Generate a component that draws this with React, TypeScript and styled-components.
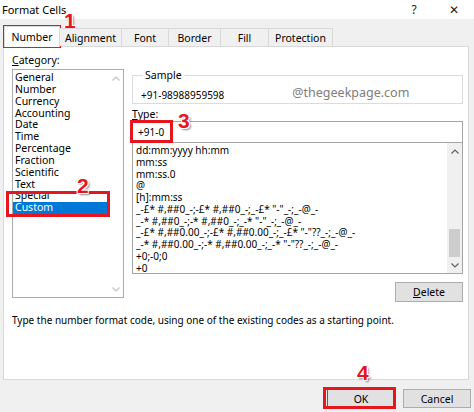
import React from "react";
import styled, { createGlobalStyle } from "styled-components";

const Global = createGlobalStyle`
  html, body { margin: 0; padding: 0; background: #f0f0f0; }
  body { font-family: "Noto Sans", "Open Sans", sans-serif; }
`;

const Window = styled.div`
  position: relative;
  width: 474px;
  height: 412px;
  overflow: hidden;
  background: #f0f0f0;
  display: flex;
  flex-direction: column;
  font-family: "Noto Sans", "Open Sans", sans-serif;
  font-size: 10px;
  color: #000;
`;

const TitleBar = styled.div`
  height: 19px;
  background: #fff;
  display: flex;
  align-items: center;
  padding-left: 2px;
`;

const Title = styled.div`
  flex: 1;
  font-size: 11px;
`;

const TitleButton = styled.div`
  width: 40px;
  text-align: center;
  font-size: 12px;
  color: #222;
`;

const TabStrip = styled.div`
  height: 27px;
  display: flex;
  align-items: flex-end;
  padding-left: 5px;
  position: relative;
  z-index: 1;
`;

const Tab = styled.div<{ $w: number; $active?: boolean }>`
  width: ${(p) => p.$w}px;
  height: ${(p) => (p.$active ? 21 : 18)}px;
  box-sizing: border-box;
  border: 1px solid #d9d9d9;
  border-bottom: none;
  margin-left: -1px;
  margin-bottom: ${(p) => (p.$active ? -1 : 0)}px;
  background: ${(p) => (p.$active ? "#fff" : "#f0f0f0")};
  display: flex;
  align-items: center;
  justify-content: center;
  font-size: 10.5px;
`;

const Panel = styled.div`
  margin-left: 3px;
  width: 466px;
  height: 334px;
  box-sizing: border-box;
  border: 1px solid #d9d9d9;
  background: #fff;
  padding: 6px 0 0 8px;
  display: flex;
  flex-direction: column;
`;

const Columns = styled.div`
  display: flex;
  gap: 8px;
`;

const LeftCol = styled.div`
  width: 112px;
  display: flex;
  flex-direction: column;
`;

const RightCol = styled.div`
  width: 331px;
  margin-top: 16px;
  display: flex;
  flex-direction: column;
`;

const Label = styled.div`
  height: 16px;
  line-height: 14px;
  font-size: 10.5px;
`;

const Key = styled.span`
  text-decoration: underline;
`;

const ListBox = styled.div`
  height: 229px;
  box-sizing: border-box;
  border: 1px solid #ababab;
  display: flex;
`;

const ListItems = styled.div`
  flex: 1;
  padding-top: 2px;
`;

const CatItem = styled.div<{ $selected?: boolean }>`
  height: 11.85px;
  line-height: 11.85px;
  padding-left: 2px;
  font-size: 10.5px;
  background: ${(p) => (p.$selected ? "#0078d7" : "transparent")};
  color: ${(p) => (p.$selected ? "#fff" : "#000")};
  margin-right: 1px;
`;

const ScrollCol = styled.div<{ $track?: boolean }>`
  width: 15px;
  display: flex;
  flex-direction: column;
  background: ${(p) => (p.$track ? "#f0f0f0" : "#fff")};
`;

const ArrowBtn = styled.div`
  height: 16px;
  display: flex;
  align-items: center;
  justify-content: center;
`;

const Track = styled.div`
  flex: 1;
  display: flex;
  flex-direction: column;
  justify-content: flex-end;
  align-items: center;
`;

const Thumb = styled.div`
  width: 11px;
  height: 28px;
  background: #cdcdcd;
`;

const GroupBox = styled.fieldset`
  margin: 0;
  padding: 0 8px 0 8px;
  height: 35px;
  box-sizing: border-box;
  border: 1px solid #dcdcdc;
  display: flex;
  align-items: center;
`;

const Legend = styled.legend`
  padding: 0 2px;
  margin-left: 2px;
  font-size: 10.5px;
  line-height: 12px;
`;

const SampleValue = styled.span`
  font-size: 10px;
  margin-top: 7px;
`;

const Watermark = styled.span`
  margin-left: 68px;
  font-size: 12.5px;
  color: #7d7d7d;
  margin-top: 1px;
`;

const TypeLabel = styled.div`
  height: 17px;
  line-height: 20px;
  font-size: 10.5px;
`;

const TextInput = styled.div`
  height: 21px;
  box-sizing: border-box;
  border: 1px solid #a5a5a5;
  border-bottom: none;
  padding-left: 5px;
  display: flex;
  align-items: center;
  font-size: 10px;
`;

const FormatList = styled.div`
  height: 132px;
  box-sizing: border-box;
  border: 1px solid #a5a5a5;
  display: flex;
`;

const FormatItems = styled.div`
  flex: 1;
  padding: 2px 0 0 3px;
  overflow: hidden;
`;

const FormatItem = styled.div`
  height: 11.75px;
  line-height: 11.75px;
  font-size: 10px;
  white-space: pre;
`;

const ButtonRow = styled.div`
  display: flex;
  justify-content: flex-end;
  gap: 8px;
`;

const Button = styled.div`
  width: 68px;
  height: 19px;
  box-sizing: border-box;
  border: 1px solid #adadad;
  background: #e1e1e1;
  display: flex;
  align-items: center;
  justify-content: center;
  font-size: 10.5px;
`;

const DeleteRow = styled(ButtonRow)`
  margin-top: 8px;
`;

const DeleteButton = styled(Button)`
  height: 20px;
`;

const HelpText = styled.div`
  margin-top: 11px;
  line-height: 14px;
  font-size: 10px;
`;

const Footer = styled(ButtonRow)`
  padding: 9px 3px 0 0;
`;

const OkButton = styled(Button)`
  border-color: #0078d7;
`;

const Callout = styled.div<{ $x: number; $y: number; $w: number; $h: number }>`
  position: absolute;
  left: ${(p) => p.$x}px;
  top: ${(p) => p.$y}px;
  width: ${(p) => p.$w}px;
  height: ${(p) => p.$h}px;
  box-sizing: border-box;
  border: 3px solid #e5161e;
  pointer-events: none;
`;

const Step = styled.span<{ $x: number; $y: number }>`
  position: absolute;
  left: ${(p) => p.$x}px;
  top: ${(p) => p.$y}px;
  font-family: "Liberation Sans", Arial, sans-serif;
  font-weight: bold;
  font-size: 21px;
  line-height: 21px;
  color: #e5161e;
  text-shadow: -1px -1px 0 #fff, 1px -1px 0 #fff, -1px 1px 0 #fff, 1px 1px 0 #fff,
    2px 2px 2px rgba(0, 0, 0, 0.45);
`;

const Chevron = ({ up, color }: { up?: boolean; color: string }) => (
  <svg width="8" height="5" viewBox="0 0 8 5">
    <polyline
      points={up ? "0.5,4.5 4,1 7.5,4.5" : "0.5,0.5 4,4 7.5,0.5"}
      fill="none"
      stroke={color}
      strokeWidth="1.2"
    />
  </svg>
);

const tabs = [
  { label: "Number", w: 56, active: true },
  { label: "Alignment", w: 63 },
  { label: "Font", w: 48 },
  { label: "Border", w: 53 },
  { label: "Fill", w: 49 },
  { label: "Protection", w: 65 },
];

const categories = [
  "General",
  "Number",
  "Currency",
  "Accounting",
  "Date",
  "Time",
  "Percentage",
  "Fraction",
  "Scientific",
  "Text",
  "Special",
  "Custom",
];

const formats = [
  "dd:mm:yyyy hh:mm",
  "mm:ss",
  "mm:ss.0",
  "@",
  "[h]:mm:ss",
  '_-£* #,##0_-;-£* #,##0_-;_-£* "-"_-;_-@_-',
  '_-* #,##0_-;-* #,##0_-;_-* "-"_-;_-@_-',
  '_-£* #,##0.00_-;-£* #,##0.00_-;_-£* "-"??_-;_-@_-',
  '_-* #,##0.00_-;-* #,##0.00_-;_-* "-"??_-;_-@_-',
  "+0;-0;0",
  "+0",
];

export default function App() {
  return (
    <Window>
      <Global />
      <TitleBar>
        <Title>Format Cells</Title>
        <TitleButton>?</TitleButton>
        <TitleButton>✕</TitleButton>
      </TitleBar>
      <TabStrip>
        {tabs.map((t) => (
          <Tab key={t.label} $w={t.w} $active={t.active}>
            {t.label}
          </Tab>
        ))}
      </TabStrip>
      <Panel>
        <Columns>
          <LeftCol>
            <Label>
              <Key>C</Key>ategory:
            </Label>
            <ListBox>
              <ListItems>
                {categories.map((c) => (
                  <CatItem key={c} $selected={c === "Custom"}>
                    {c}
                  </CatItem>
                ))}
              </ListItems>
              <ScrollCol>
                <ArrowBtn>
                  <Chevron up color="#c4c4c4" />
                </ArrowBtn>
                <Track />
                <ArrowBtn>
                  <Chevron color="#c4c4c4" />
                </ArrowBtn>
              </ScrollCol>
            </ListBox>
          </LeftCol>
          <RightCol>
            <GroupBox>
              <Legend>Sample</Legend>
              <SampleValue>+91-98988959598</SampleValue>
              <Watermark>@thegeekpage.com</Watermark>
            </GroupBox>
            <TypeLabel>
              <Key>T</Key>ype:
            </TypeLabel>
            <TextInput>+91-0</TextInput>
            <FormatList>
              <FormatItems>
                {formats.map((f, i) => (
                  <FormatItem key={i}>{f}</FormatItem>
                ))}
              </FormatItems>
              <ScrollCol $track>
                <ArrowBtn>
                  <Chevron up color="#606060" />
                </ArrowBtn>
                <Track>
                  <Thumb />
                </Track>
                <ArrowBtn>
                  <Chevron color="#606060" />
                </ArrowBtn>
              </ScrollCol>
            </FormatList>
            <DeleteRow>
              <DeleteButton>
                <span>
                  <Key>D</Key>elete
                </span>
              </DeleteButton>
            </DeleteRow>
          </RightCol>
        </Columns>
        <HelpText>
          Type the number format code, using one of the existing codes as a starting point.
        </HelpText>
      </Panel>
      <Footer>
        <OkButton>OK</OkButton>
        <Button>Cancel</Button>
      </Footer>

      <Callout $x={3} $y={25} $w={58} $h={23} />
      <Callout $x={6} $y={191} $w={104} $h={26} />
      <Callout $x={130} $y={120} $w={43} $h={23} />
      <Callout $x={323} $y={387} $w={73} $h={22} />
      <Step $x={64} $y={10}>1</Step>
      <Step $x={77} $y={175}>2</Step>
      <Step $x={178} $y={110}>3</Step>
      <Step $x={357} $y={362}>4</Step>
    </Window>
  );
}
